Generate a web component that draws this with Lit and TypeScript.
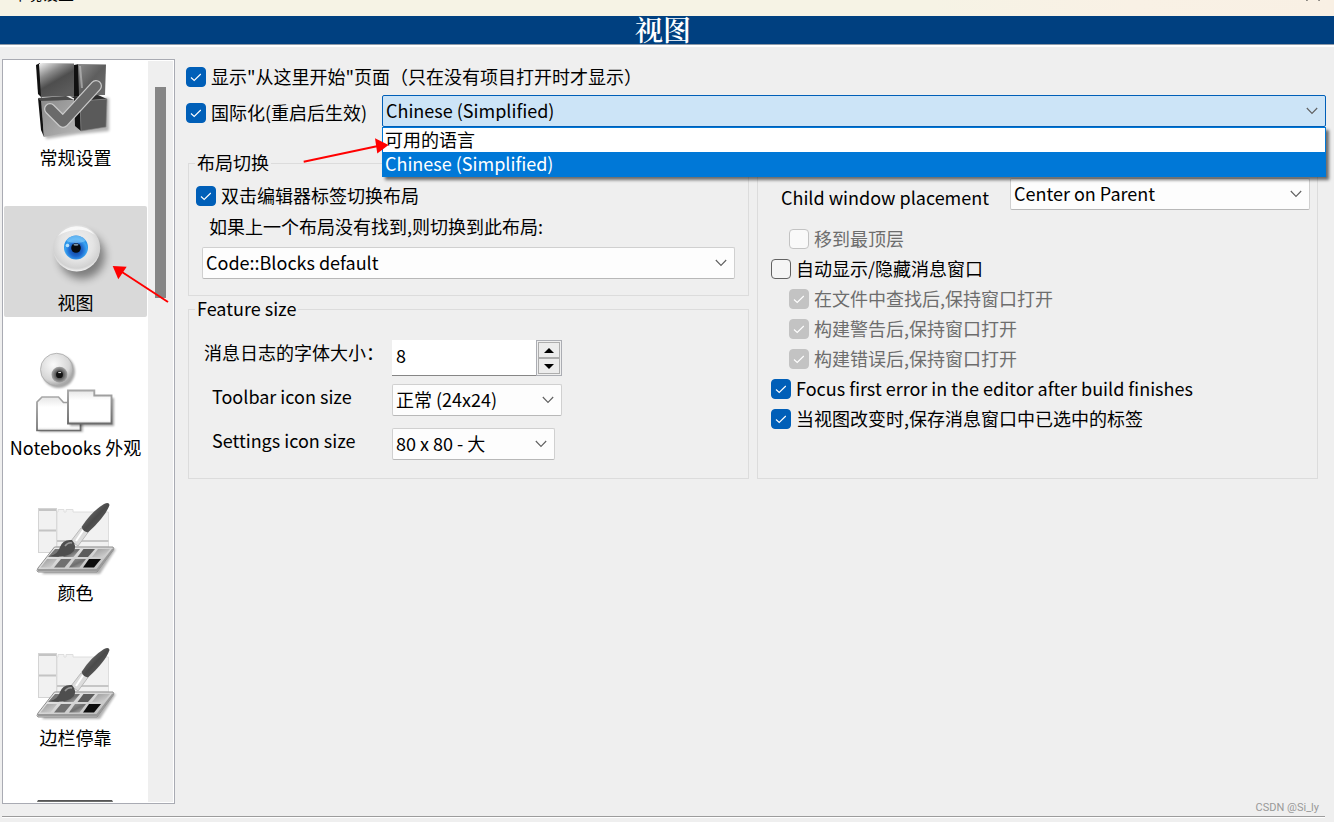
import { LitElement, html, css, svg, nothing } from "lit";
import { customElement, state } from "lit/decorators.js";

const cubes = svg`
  <defs>
    <linearGradient id="cubeA" x1="0" y1="0" x2="0.6" y2="1">
      <stop offset="0" stop-color="#f4f4f4"/><stop offset="0.35" stop-color="#8a8a8a"/><stop offset="0.6" stop-color="#4e4e4e"/><stop offset="1" stop-color="#5c5c5c"/>
    </linearGradient>
    <linearGradient id="cubeB" x1="0" y1="0" x2="1" y2="1">
      <stop offset="0" stop-color="#8c8c8c"/><stop offset="0.5" stop-color="#5e5e5e"/><stop offset="1" stop-color="#6e6e6e"/>
    </linearGradient>
    <linearGradient id="cubeC" x1="0" y1="0" x2="1" y2="1">
      <stop offset="0" stop-color="#8a8a8a"/><stop offset="1" stop-color="#b4b4b4"/>
    </linearGradient>
    <filter id="soft" x="-20%" y="-20%" width="150%" height="150%"><feGaussianBlur stdDeviation="1.4"/></filter>
  </defs>
  <path d="M4 37 L38 38 L73 36 L73 69 L42 72 L10 77 Z" fill="#000" opacity=".3" filter="url(#soft)"/>
  <path d="M0 3 L4 1 L6 36 L2 32 Z" fill="#111"/>
  <path d="M3 2 L6 1 L38 1.5 L38 34 L5 35 Z" fill="url(#cubeA)"/>
  <path d="M38 3 L43 2 L43 34 L38 35 Z" fill="#111"/>
  <path d="M42 2 L70 2.5 L69 33 L43 33.5 Z" fill="url(#cubeB)"/>
  <path d="M44 4 L46 26" stroke="#c4c4c4" stroke-width="2" opacity=".6"/>
  <path d="M2 36 L6 39 L8 75 L5 68 Z" fill="#111"/>
  <path d="M2 36 L30 34 L38 38 L6 40 Z" fill="#4c4c4c"/>
  <path d="M5 39 L38 38 L38 69 L8 75 Z" fill="url(#cubeC)"/>
  <path d="M38 36 L44 38 L45 69 L39 64 Z" fill="#111"/>
  <path d="M34 34.500 L62 33 L71 37 L44 39 Z" fill="#2c2c2c"/>
  <path d="M44 39 L71 37 L70 65 L45 69 Z" fill="#5a5a5a" stroke="#8a8a8a" stroke-width=".6"/>
  <path d="M14 47 L27 60 L60 24" fill="none" stroke="#c9c9c9" stroke-width="12" stroke-linecap="round" stroke-linejoin="round"/>
  <path d="M14 47 L27 60 L60 24" fill="none" stroke="#6a6a6a" stroke-width="9.500" stroke-linecap="round" stroke-linejoin="round"/>`;

const eye = svg`
  <defs>
    <radialGradient id="ball" cx=".5" cy=".42" r=".58">
      <stop offset="0" stop-color="#f2f2f2"/><stop offset=".6" stop-color="#e4e4e4"/><stop offset=".88" stop-color="#d2d2d2"/><stop offset="1" stop-color="#f6f6f6"/>
    </radialGradient>
    <radialGradient id="iris" cx=".5" cy=".6" r=".6">
      <stop offset="0" stop-color="#0b3c92"/><stop offset=".45" stop-color="#1d66cc"/><stop offset=".75" stop-color="#3aa4f2"/><stop offset="1" stop-color="#127fdc"/>
    </radialGradient>
    <filter id="blur" x="-40%" y="-40%" width="190%" height="190%"><feGaussianBlur stdDeviation="4"/></filter>
  </defs>
  <circle cx="46" cy="49" r="23" fill="#000" opacity=".42" filter="url(#blur)"/>
  <circle cx="40.7" cy="41" r="23.5" fill="url(#ball)"/>
  <path d="M22 29 A23 23 0 0 1 59 28 Q50 22 40 23 Q29 24 22 29 Z" fill="#fff" opacity=".75"/>
  <circle cx="40" cy="40.5" r="12" fill="url(#iris)"/>
  <path d="M30 34 A12 12 0 0 1 50 34 Q40 38 30 34 Z" fill="#8fd0fb" opacity=".6"/>
  <circle cx="40" cy="41" r="4.8" fill="#070b10"/>
  <circle cx="31.5" cy="38.5" r="1.8" fill="#b9e2fb"/>
  <ellipse cx="40" cy="37.8" rx="2.6" ry="1" fill="#9ab6cc" opacity=".8"/>`;

const folders = svg`
  <defs>
    <radialGradient id="ballG" cx=".4" cy=".35" r=".65">
      <stop offset="0" stop-color="#fafafa"/><stop offset=".75" stop-color="#d6d6d6"/><stop offset="1" stop-color="#aaa"/>
    </radialGradient>
    <radialGradient id="irisG"><stop offset="0" stop-color="#222"/><stop offset=".45" stop-color="#555"/><stop offset="1" stop-color="#a6a6a6"/></radialGradient>
    <linearGradient id="fold" x1="0" y1="0" x2="0" y2="1"><stop offset="0" stop-color="#e6e6e6"/><stop offset=".3" stop-color="#fff"/><stop offset=".9" stop-color="#fff"/><stop offset="1" stop-color="#ddd"/></linearGradient>
    <linearGradient id="foldLine" x1="0" y1="0" x2="0" y2="1"><stop offset="0" stop-color="#a8a8a8"/><stop offset="1" stop-color="#6c6c6c"/></linearGradient>
    <filter id="soft" x="-20%" y="-20%" width="150%" height="150%"><feGaussianBlur stdDeviation="1.2"/></filter>
  </defs>
  <circle cx="22.5" cy="19.5" r="16.5" opacity=".35" filter="url(#soft)"/>
  <circle cx="20.7" cy="17.5" r="16.2" fill="url(#ballG)" stroke="#aaa" stroke-width=".8"/>
  <circle cx="23.5" cy="22.7" r="8" fill="url(#irisG)"/>
  <circle cx="23.5" cy="22.7" r="3.4" fill="#111"/>
  <path d="M22.300 20.500 h2.800" stroke="#ddd" stroke-width="1.2"/>
  <path d="M3 52 H47 V80 H3 Z" opacity=".3" filter="url(#soft)"/>
  <path d="M1 78.5 V50 L6 45 H22.5 L27.5 50.5 H44.5 V78.5 Z" fill="url(#fold)" stroke="url(#foldLine)" stroke-width="1.7"/>
  <path d="M34 46 H78 V74 H34 Z" opacity=".35" filter="url(#soft)"/>
  <path d="M32 71.5 V38.5 H58.3 V43.5 H75.500 V71.5 Z" fill="url(#fold)" stroke="url(#foldLine)" stroke-width="1.9"/>`;

const palette = svg`
  <defs>
    <linearGradient id="handle" x1="0" y1="0" x2="1" y2="1"><stop offset="0" stop-color="#8c8c8c"/><stop offset=".5" stop-color="#4a4a4a"/><stop offset="1" stop-color="#6c6c6c"/></linearGradient>
    <linearGradient id="tray" x1="0" y1="0" x2="1" y2="1"><stop offset="0" stop-color="#f2f2f2"/><stop offset="1" stop-color="#b4b4b4"/></linearGradient>
    <linearGradient id="mid" x1="0" y1="0" x2="1" y2="1"><stop offset="0" stop-color="#9a9a9a"/><stop offset=".5" stop-color="#6e6e6e"/><stop offset="1" stop-color="#c0c0c0"/></linearGradient>
    <linearGradient id="pale" x1="0" y1="0" x2="1" y2="1"><stop offset="0" stop-color="#999"/><stop offset="1" stop-color="#d8d8d8"/></linearGradient>
    <filter id="soft" x="-20%" y="-20%" width="150%" height="150%"><feGaussianBlur stdDeviation="1.2"/></filter>
  </defs>
  <rect x="2.5" y="11.5" width="18" height="44" fill="#f1f1f1" stroke="#d4d4d4"/>
  <path d="M3 13 H20 M3 33.5 H20" stroke="#c4c4c4" stroke-width="2"/>
  <path d="M21 50 V15 H22 V12.500 H28 V15 H30 V12.500 H37 V15 H72.500 V50 Z" fill="#f1f1f1" stroke="#dedede"/>
  <path d="M21 44 H72.500" stroke="#c6c6c6" stroke-width="2"/>
  <path d="M20 54 L80 52 L64 77 H6 Z" opacity=".3" filter="url(#soft)"/>
  <path d="M18.500 50 H77 L78 52 L61 75 H2 Q0 74 2 71 Z" fill="url(#tray)" stroke="#8f8f8f" stroke-width="1"/>
  <path d="M2 73 H61 L77 52" fill="none" stroke="#999" stroke-width="2"/>
  <path d="M19 52 H29 L22.500 60 H12 Z" fill="#777"/>
  <path d="M33 52 H44 L37.500 60 H27 Z" fill="url(#mid)"/>
  <path d="M47.500 52 H59 L52 60 H41.500 Z" fill="#5c5c5c"/>
  <path d="M62 52 H74 L67 60 H56 Z" fill="url(#pale)"/>
  <path d="M11 62 H21 L14.500 70.500 H4.500 Z" fill="url(#pale)"/>
  <path d="M25 62 H35.500 L28.500 70.500 H18 Z" fill="#707070"/>
  <path d="M39 62 H50 L43.500 70.500 H33 Z" fill="url(#mid)"/>
  <path d="M53 62 H65 L58 70.500 H47 Z" fill="#0c0c0c"/>
  <path d="M45 31 L52 35.500 L42 49 L35 44 Z" fill="#dcdcdc" stroke="#a8a8a8" stroke-width=".7"/>
  <path d="M48 32 L40 44" stroke="#fff" stroke-width="2"/>
  <path d="M45.500 30 Q55 15 68 7 Q73 4.500 73.500 8 Q70 19 52 35.500 Q47 34.500 45.500 30 Z" fill="url(#handle)"/>
  <path d="M14 59 Q22 57 24 50 Q27 42 36 43 Q41 49 38 54 Q30 62 14 59 Z" fill="#4e4e4e"/>
  <path d="M29 49 Q32 45 36 46" fill="none" stroke="#999" stroke-width="1.500"/>`;

const bar = svg`<rect x="1" y="13" width="76" height="40" rx="2" fill="#6d6f6d"/><path d="M2 13.500 H76" stroke="#555" stroke-width="1"/>`;

const PAGES = [
  { label: "常规设置", icon: cubes },
  { label: "视图", icon: eye },
  { label: "Notebooks 外观", icon: folders },
  { label: "颜色", icon: palette },
  { label: "边栏停靠", icon: palette },
  { label: "", icon: bar },
];

@customElement("nav-icon")
class NavIcon extends LitElement {
  static properties = { art: { attribute: false } };
  declare art: unknown;
  static styles = css`
    :host { display: block; width: 80px; height: 80px; }
    svg { display: block; overflow: visible; }
  `;
  render() {
    return html`<svg width="80" height="80" viewBox="0 0 80 80" aria-hidden="true">${this.art}</svg>`;
  }
}

@customElement("app-root")
class AppRoot extends LitElement {
  @state() private page = 1;
  @state() private fontSize = 8;

  static styles = css`
    :host {
      display: flex;
      flex-direction: column;
      position: relative;
      height: 100vh;
      overflow: hidden;
      background: #efefef;
      color: #000;
      font-family: "Noto Sans CJK SC", "Noto Sans", sans-serif;
      font-size: 18px;
      line-height: 22px;
    }
    * { box-sizing: border-box; }
    button, input, select { font: inherit; color: inherit; margin: 0; }

    .titlebar {
      display: flex;
      flex: none;
      align-items: flex-end;
      justify-content: space-between;
      height: 16px;
      padding: 0 12px 13px 10px;
      overflow: hidden;
      background: linear-gradient(90deg, #f6f3e5 0%, #f6f3e5 70%, #f9f1e5 85%, #f9f0e4 100%);
      font-size: 16px;
      line-height: 20px;
    }
    .close { flex: none; display: flex; padding: 0 2px 2px; border: 0; background: none; }

    .banner {
      flex: none;
      height: 31px;
      margin: 0;
      border-bottom: 2px solid #fff;
      box-shadow: inset 0 -1px #8e9aa8;
      background: #004080;
      color: #fff;
      font: 600 28px/27px "Noto Serif CJK SC", "Noto Sans CJK SC", serif;
      text-align: center;
      padding-right: 8px;
    }

    .body { display: flex; flex: 1; min-height: 0; padding: 12px 8px 0 2px; gap: 11px; }

    .side { display: flex; flex: none; width: 173px; border: 1px solid #a9abb3; padding: 1px; background: #fff; }
    .pages {
      display: flex; flex-direction: column; gap: 34px;
      flex: 1; min-width: 0; margin: 0; padding: 0; overflow: hidden; list-style: none;
    }
    .page {
      display: flex; flex-direction: column; align-items: center; gap: 4px;
      width: 143px; height: 111px; padding: 1px 0 0;
      border: 0; border-radius: 2px; background: none; white-space: nowrap;
    }
    .page.current { background: #d9d9d9; }
    .track { flex: none; width: 25px; padding: 26px 7px 0; background: #efefef; }
    .thumb { width: 11px; height: 211px; background: #868686; }

    .main { flex: 1; min-width: 0; }
    .check { display: flex; align-items: center; gap: 5px; height: 24px; white-space: nowrap; }
    .check span { padding-bottom: 2px; }
    .check input {
      appearance: none; flex: none; width: 20px; height: 20px;
      border: 1px solid #626262; border-radius: 4px; background: #f5f5f5 center / 20px 20px no-repeat;
    }
    .check input:checked {
      border-color: #005fb8; background-color: #005fb8;
      background-image: url("data:image/svg+xml,%3Csvg xmlns='http://www.w3.org/2000/svg' viewBox='0 0 20 20'%3E%3Cpath d='M5 10.500 8.200 13.500 14.800 7' fill='none' stroke='white' stroke-width='1.100'/%3E%3C/svg%3E");
    }
    .check input:disabled { border-color: #c3c3c3; background-color: #f9f9f9; }
    .check input:checked:disabled { background-color: #c3c3c3; }
    .check.off { color: #6d6d6d; }
    .check.tall { height: 36px; }

    .combo {
      appearance: none; display: block; height: 32px; padding: 0 28px 2px 3px;
      border: 1px solid #d0d0d0; border-bottom-color: #b8b8b8; border-radius: 2px;
      background: #fdfdfd url("data:image/svg+xml,%3Csvg xmlns='http://www.w3.org/2000/svg' width='12' height='8'%3E%3Cpath d='M.8 1 6 6.500 11.200 1' fill='none' stroke='%23606060' stroke-width='1.100'/%3E%3C/svg%3E") right 7px center no-repeat;
    }
    .lang { display: flex; }
    .lang .check { width: 196px; height: 36px; }
    .picker { position: relative; flex: 1; height: 32px; }
    .combo.open { width: 100%; border-color: #005fb8; background-color: #cce4f7; }
    .menu {
      position: absolute; z-index: 2; top: 32px; left: 0; right: 0;
      margin: 0; padding: 0; list-style: none;
      border: 1px solid #0078d7; background: #fff; box-shadow: 3px 3px 3px rgba(0, 0, 0, .55);
    }
    .menu li { padding: 0 2px 2px; }
    .menu .on { background: #0078d7; color: #fff; }

    .groups { display: grid; grid-template-columns: 1fr 1fr; gap: 8px; padding: 20px 8px 0 2px; }
    .left { display: grid; gap: 1px; min-width: 0; }
    fieldset { min-width: 0; margin: 0; border: 1px solid #dcdcdc; padding: 0; }
    legend { height: 24px; margin-left: 6px; padding: 0 2px; }
    .layout { display: grid; padding: 9px 13px 16px 13px; }
    .layout .check { margin-left: -6px; }
    .layout .hint { padding: 7px 0 10px 7px; }
    .layout .combo { width: 100%; }

    .sizes { display: grid; grid-template-columns: 188px 1fr; grid-auto-rows: 36px; row-gap: 8px; padding: 19px 8px 14px 15px; }
    .sizes label { line-height: 24px; white-space: nowrap; }
    .sizes .inset { padding-left: 8px; }
    .sizes .combo { width: 170px; }
    .sizes .narrow { width: 163px; }
    .spin { display: flex; width: 170px; height: 36px; }
    .spin input {
      appearance: textfield; flex: 1; min-width: 0; padding: 0 4px 6px; border: 0;
      border-bottom: 1px solid #868686; border-radius: 0; background: #fff;
    }
    .spin input::-webkit-inner-spin-button { appearance: none; }
    .steps { display: grid; flex: none; width: 26px; padding: 1px; border: 1px solid #abadb3; }
    .steps button { display: grid; place-items: center; padding: 0; border: 1px solid #adadad; background: #ececec; }

    .misc { margin-top: 12px; padding: 14px 7px 0 13px; }
    .place { display: flex; padding: 0 0 14px 10px; }
    .place label { width: 229px; flex: none; line-height: 38px; height: 32px; }
    .place .combo { flex: 1; min-width: 0; }
    .misc .check { height: 30px; }
    .misc .sub { padding-left: 18px; }

    .foot {
      flex: none; height: 14px; margin: 0 9px 4px 2px; padding-right: 6px;
      border-bottom: 1px solid #fff; box-shadow: inset 0 -1px #9c9c9c;
      color: #999; font-size: 11px; line-height: 8px; text-align: right;
      font-family: Roboto, "Liberation Sans", sans-serif;
    }
    .marks { position: absolute; z-index: 3; top: 0; left: 0; pointer-events: none; }
  `;

  private check(label: string, checked: boolean, cls = "", disabled = false) {
    return html`<label class="check ${cls} ${disabled ? "off" : ""}">
      <input type="checkbox" .checked=${checked} ?disabled=${disabled}><span>${label}</span>
    </label>`;
  }

  private step(by: number) {
    this.fontSize = Math.max(6, this.fontSize + by);
  }

  render() {
    return html`
      <header class="titlebar">
        <span>环境设置</span>
        <button class="close" aria-label="关闭">
          <svg width="14" height="14" viewBox="0 0 14 14"><path d="M.5 .5 13.500 13.500 M13.500 .5 .5 13.500" stroke="#222" stroke-width="1.300"/></svg>
        </button>
      </header>
      <h1 class="banner">视图</h1>

      <div class="body">
        <nav class="side">
          <ul class="pages">
            ${PAGES.map((p, i) => html`<li>
              <button class="page ${i === this.page ? "current" : ""}" @click=${() => (this.page = i)}>
                <nav-icon .art=${p.icon}></nav-icon>
                ${p.label ? html`<span>${p.label}</span>` : nothing}
              </button>
            </li>`)}
          </ul>
          <div class="track"><div class="thumb"></div></div>
        </nav>

        <main class="main">
          ${this.check('显示"从这里开始"页面（只在没有项目打开时才显示）', true, "tall")}
          <div class="lang">
            ${this.check("国际化(重启后生效)", true)}
            <div class="picker">
              <select class="combo open" aria-label="国际化">
                <option>Chinese (Simplified)</option>
              </select>
              <ul class="menu" role="listbox">
                <li role="option">可用的语言</li>
                <li role="option" class="on" aria-selected="true">Chinese (Simplified)</li>
              </ul>
            </div>
          </div>

          <div class="groups">
            <div class="left">
              <fieldset>
                <legend>布局切换</legend>
                <div class="layout">
                  ${this.check("双击编辑器标签切换布局", true)}
                  <label class="hint" for="fallback">如果上一个布局没有找到,则切换到此布局:</label>
                  <select class="combo" id="fallback"><option>Code::Blocks default</option></select>
                </div>
              </fieldset>
              <fieldset>
                <legend>Feature size</legend>
                <div class="sizes">
                  <label for="logsize">消息日志的字体大小：</label>
                  <div class="spin">
                    <input id="logsize" type="number" .value=${String(this.fontSize)}>
                    <div class="steps">
                      <button aria-label="+" @click=${() => this.step(1)}><svg width="10" height="5"><path d="M0 5 5 0 10 5Z"/></svg></button>
                      <button aria-label="-" @click=${() => this.step(-1)}><svg width="10" height="5"><path d="M0 0 5 5 10 0Z"/></svg></button>
                    </div>
                  </div>
                  <label class="inset" for="tool">Toolbar icon size</label>
                  <select class="combo" id="tool"><option>正常 (24x24)</option></select>
                  <label class="inset" for="set">Settings icon size</label>
                  <select class="combo narrow" id="set"><option>80 x 80 - 大</option></select>
                </div>
              </fieldset>
            </div>

            <fieldset class="misc">
              <div class="place">
                <label for="child">Child window placement</label>
                <select class="combo" id="child"><option>Center on Parent</option></select>
              </div>
              ${this.check("移到最顶层", false, "sub", true)}
              ${this.check("自动显示/隐藏消息窗口", false)}
              ${this.check("在文件中查找后,保持窗口打开", true, "sub", true)}
              ${this.check("构建警告后,保持窗口打开", true, "sub", true)}
              ${this.check("构建错误后,保持窗口打开", true, "sub", true)}
              ${this.check("Focus first error in the editor after build finishes", true)}
              ${this.check("当视图改变时,保存消息窗口中已选中的标签", true)}
            </fieldset>
          </div>
        </main>
      </div>
      <footer class="foot">CSDN @Si_ly</footer>

      <svg class="marks" width="400" height="310" aria-hidden="true">
        <g fill="#f00" stroke="#f00">
          <path d="M168 302 122 272" stroke-width="2"/>
          <path d="M112.700 266 126.700 266.700 118.300 279.300Z" stroke="none"/>
          <path d="M303.700 161.700 378 146" stroke-width="2"/>
          <path d="M375 138.300 388.500 145 377.300 153.500Z" stroke="none"/>
        </g>
      </svg>
    `;
  }
}
